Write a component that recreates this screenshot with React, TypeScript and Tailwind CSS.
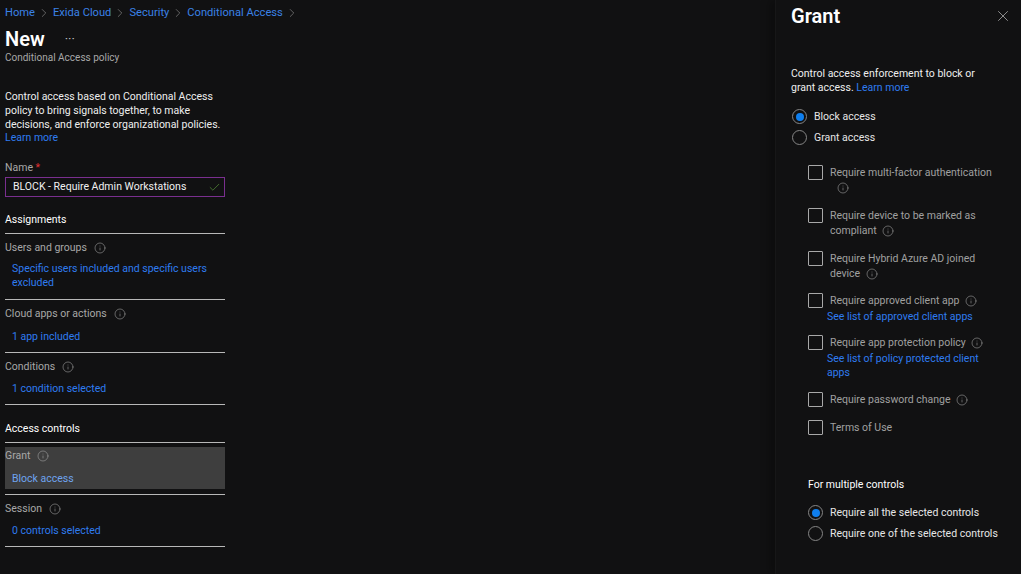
import { Check, ChevronRight, Info, X } from "lucide-react";

function Tip({ className = "" }: { className?: string }) {
  return <Info size={12} strokeWidth={1.1} className={`inline-block shrink-0 text-[#a8a8a8] ${className}`} />;
}

function Crumb({ label }: { label: string }) {
  return (
    <>
      <span className="text-[#3b82e6]">{label}</span>
      <ChevronRight size={14} strokeWidth={1} className="mx-[2px] text-[#9a9a9a]" />
    </>
  );
}

// one row of the assignments / access controls list
function Section({ label, link, h, gap }: { label: string; link: string; h: string; gap: string }) {
  return (
    <div className={`${h} pt-[7px] border-b border-[#b8b8b8]`}>
      <div className="flex items-center gap-[7px] text-[#a8a8a8] h-[14px]">
        {label} <Tip />
      </div>
      <div className={`pl-[7px] leading-[14px] text-[#2f7cf0] ${gap}`}>{link}</div>
    </div>
  );
}

function Radio({ on, label, className = "" }: { on?: boolean; label: string; className?: string }) {
  return (
    <div className={`flex items-center h-[21px] gap-[7px] text-[#e6e6e6] ${className}`}>
      <span className="w-[15px] h-[15px] rounded-full border border-[#858585] flex items-center justify-center shrink-0">
        {on && <span className="w-[8px] h-[8px] rounded-full bg-[#0f7fef]" />}
      </span>
      <span className="whitespace-nowrap">{label}</span>
    </div>
  );
}

function CheckRow({ h, children }: { h: string; children: React.ReactNode }) {
  return (
    <div className={`flex ${h}`}>
      <span className="w-[15px] h-[15px] border border-[#a8a8a8] rounded-[1px] shrink-0" />
      <div className="ml-[7px] pt-[1px] text-[#a0a0a0] leading-[14.5px] min-w-0">{children}</div>
    </div>
  );
}

export default function App() {
  return (
    <div className="font-['Roboto',sans-serif] w-[1021px] h-[574px] overflow-hidden bg-[#111112] flex text-[10.5px] text-[#e6e6e6]">
      {/* BLADE */}
      <div className="w-[775px] pl-[5px]">
        <div className="flex items-center h-[14px] mt-[6px] text-[11.15px]">
          <Crumb label="Home" />
          <Crumb label="Exida Cloud" />
          <Crumb label="Security" />
          <Crumb label="Conditional Access" />
        </div>
        <div className="flex items-center h-[25px] mt-[6px]">
          <span className="text-[20px] font-semibold text-white">New</span>
          <span className="ml-[20px] text-[#bbbbbb] text-[13px] leading-none">···</span>
        </div>
        <div className="text-[10px] text-[#a8a8a8] h-[14px] leading-[14px]">Conditional Access policy</div>

        <div className="w-[220px]">
          <p className="mt-[25px] leading-[13.8px] text-[#eeeeee]">
            Control access based on Conditional Access policy to bring signals together, to make decisions, and enforce organizational policies.
            <span className="block text-[#2f7cf0]">Learn more</span>
          </p>
          <div className="mt-[16px] h-[14px] leading-[14px] text-[#a8a8a8]">
            Name <span className="text-[#e03030]">*</span>
          </div>
          <div className="mt-[2px] h-[20px] border border-[#7a2f8f] flex items-center justify-between pl-[7px] pr-[3px]">
            <span className="text-[#f0f0f0]">BLOCK - Require Admin Workstations</span>
            <Check size={13} strokeWidth={1.2} className="text-[#5c9c3c]" />
          </div>

          <div className="mt-[16px] h-[14px] leading-[14px] text-white">Assignments</div>
          <div className="mt-[6px] border-b border-[#b8b8b8]" />
          <Section label="Users and groups" link="Specific users included and specific users excluded" h="h-[66px]" gap="mt-[7px]" />
          <Section label="Cloud apps or actions" link="1 app included" h="h-[53px]" gap="mt-[9px]" />
          <Section label="Conditions" link="1 condition selected" h="h-[52px]" gap="mt-[8px]" />

          <div className="mt-[17px] h-[14px] leading-[14px] text-white">Access controls</div>
          <div className="mt-[6px] border-b border-[#b8b8b8]" />
          <div className="h-[52px] pt-[4px] border-b border-[#b8b8b8]">
            <div className="h-[42px] bg-[#3e3e3e]">
              <div className="flex items-center gap-[7px] text-[#a8a8a8] h-[16px] pt-[1px]">
                Grant <Tip />
              </div>
              <div className="pl-[7px] mt-[9px] leading-[14px] text-[#6ea4f0]">Block access</div>
            </div>
          </div>
          <Section label="Session" link="0 controls selected" h="h-[52px]" gap="mt-[8px]" />
        </div>
      </div>

      {/* GRANT PANEL */}
      <div className="w-[246px] border-l border-[#171718] pl-[15px] pr-[17px] shadow-[-6px_0_8px_rgba(0,0,0,0.25)]">
        <div className="flex items-center justify-between h-[32px]">
          <span className="text-[20px] font-semibold text-white">Grant</span>
          <X size={18} strokeWidth={0.9} className="text-[#c8c8c8] -mr-[8px]" />
        </div>
        <p className="mt-[35px] leading-[14px] text-[#eeeeee]">
          Control access enforcement to block or
          <br />
          grant access. <span className="text-[#2f7cf0]">Learn more</span>
        </p>
        <div className="mt-[11px]">
          <Radio on label="Block access" className="ml-[1px]" />
          <Radio label="Grant access" className="ml-[1px]" />
        </div>
        <div className="mt-[17px] pl-[17px]">
          <CheckRow h="h-[43px]">
            Require multi-factor authentication
            <br />
            <Tip className="ml-[7px]" />
          </CheckRow>
          <CheckRow h="h-[43px]">
            Require device to be marked as
            <br />
            compliant <Tip className="ml-[3px]" />
          </CheckRow>
          <CheckRow h="h-[42px]">
            Require Hybrid Azure AD joined
            <br />
            device <Tip className="ml-[3px]" />
          </CheckRow>
          <CheckRow h="h-[42px]">
            Require approved client app <Tip className="ml-[3px]" />
            <div className="-ml-[3px] mt-[1px] text-[#2f7cf0]">See list of approved client apps</div>
          </CheckRow>
          <CheckRow h="h-[57px]">
            Require app protection policy <Tip className="ml-[3px]" />
            <div className="-ml-[3px] mt-[1px] text-[#2f7cf0]">See list of policy protected client apps</div>
          </CheckRow>
          <CheckRow h="h-[28px]">
            Require password change <Tip className="ml-[3px]" />
          </CheckRow>
          <CheckRow h="h-[29px]">Terms of Use</CheckRow>
        </div>
        <div className="mt-[29px] pl-[17px]">
          <div className="h-[14px] leading-[14px] text-white">For multiple controls</div>
          <div className="mt-[10px]">
            <Radio on label="Require all the selected controls" />
            <Radio label="Require one of the selected controls" />
          </div>
        </div>
      </div>
    </div>
  );
}
